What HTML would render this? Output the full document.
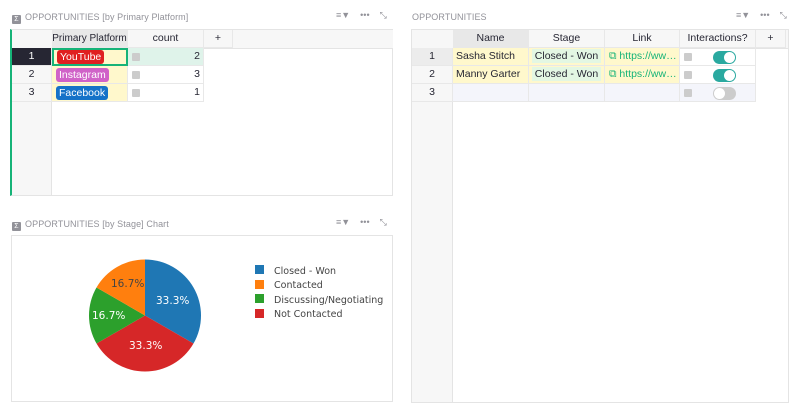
<!DOCTYPE html>
<html><head><style>
*{box-sizing:border-box;margin:0;padding:0}
body{width:800px;height:411px;background:#fff;font-family:"Liberation Sans",sans-serif;position:relative;overflow:hidden;font-size:11px;color:#262633}
.a{position:absolute}
.title{font-size:9px;color:#929299;letter-spacing:.1px;white-space:nowrap}
.sig{display:inline-block;width:9px;height:9px;background:#929299;color:#fff;font-size:7px;text-align:center;line-height:9px;border-radius:1px;margin-right:4px;vertical-align:-1px}
.icons{font-size:9px;color:#929299;white-space:nowrap}
.grid{border:1px solid #e4e4e4;background:#fff}
.c{position:absolute;border-right:1px solid #e8e8e8;border-bottom:1px solid #e8e8e8;height:18px;line-height:17px;text-align:center;font-size:10.5px;white-space:nowrap;overflow:hidden}
.h{background:#f7f7f7}
.tag{display:inline-block;color:#fff;border-radius:3px;padding:0 3px;line-height:14px;font-size:10.5px;margin-top:2px}
.ic{display:inline-block;width:8px;height:8px;background:#ccc;border-radius:1px;position:absolute;left:4px;top:5px}
.tg{position:absolute;width:23px;height:13px;border-radius:7px;top:3px;left:33px}
.tg i{position:absolute;width:11px;height:11px;border-radius:50%;background:#fff;top:1px}
</style></head><body>
<div class="a title" style="left:12px;top:12px"><span class="sig">Σ</span>OPPORTUNITIES [by Primary Platform]</div>
<div class="a icons" style="left:336px;top:10px">≡▼&nbsp;&nbsp;&nbsp;&nbsp;•••&nbsp;&nbsp;&nbsp;&nbsp;⤡</div>
<div class="a grid" style="left:10px;top:29px;width:383px;height:167px;border-left:2px solid #16b378">
 <div class="a h" style="left:0;top:0;width:40px;height:165px;border-right:1px solid #e4e4e4"></div>
 <div class="a h" style="left:0;top:0;width:381px;height:19px;border-bottom:1px solid #e4e4e4"></div>
 <div class="c h" style="left:40px;top:0;width:76px;background:#e8e8e8;font-size:10px">Primary Platform</div>
 <div class="c h" style="left:116px;top:0;width:76px">count</div>
 <div class="c h" style="left:192px;top:0;width:29px">+</div>
 <div class="c" style="left:0;top:18px;width:40px;background:#262633;color:#fff">1</div>
 <div class="c" style="left:0;top:36px;width:40px" >2</div>
 <div class="c" style="left:0;top:54px;width:40px">3</div>
 <div class="c" style="left:40px;top:18px;width:76px;background:#fff8cc;border:2px solid #16b378;text-align:left;padding-left:3px;line-height:13px"><span class="tag" style="background:#e02020;margin-top:0">YouTube</span></div>
 <div class="c" style="left:40px;top:36px;width:76px;background:#fff8cc;text-align:left;padding-left:4px"><span class="tag" style="background:#d062c8">Instagram</span></div>
 <div class="c" style="left:40px;top:54px;width:76px;background:#fff8cc;text-align:left;padding-left:4px"><span class="tag" style="background:#1572c8">Facebook</span></div>
 <div class="c" style="left:116px;top:18px;width:76px;background:#dff3ea;text-align:right;padding-right:3px"><i class="ic"></i>2</div>
 <div class="c" style="left:116px;top:36px;width:76px;text-align:right;padding-right:3px"><i class="ic"></i>3</div>
 <div class="c" style="left:116px;top:54px;width:76px;text-align:right;padding-right:3px"><i class="ic"></i>1</div>
</div>
<div class="a title" style="left:12px;top:219px"><span class="sig">Σ</span>OPPORTUNITIES [by Stage] Chart</div>
<div class="a icons" style="left:336px;top:217px">≡▼&nbsp;&nbsp;&nbsp;&nbsp;•••&nbsp;&nbsp;&nbsp;&nbsp;⤡</div>
<div class="a grid" style="left:11px;top:235px;width:382px;height:167px"></div>
<svg class="a" style="left:0;top:0" width="400" height="411">
 <path d="M145,315.5 L145,259.5 A56,56 0 0 1 193.5,343.5Z" fill="#1f77b4"/>
 <path d="M145,315.5 L193.5,343.5 A56,56 0 0 1 96.5,343.5Z" fill="#d62728"/>
 <path d="M145,315.5 L96.5,343.5 A56,56 0 0 1 96.5,287.5Z" fill="#2ca02c"/>
 <path d="M145,315.5 L96.5,287.5 A56,56 0 0 1 145,259.5Z" fill="#ff7f0e"/>
 <g font-family="DejaVu Sans" font-size="10.5" fill="#fff">
 <text x="156" y="304">33.3%</text>
 <text x="129" y="349">33.3%</text>
 <text x="92" y="319">16.7%</text>
 <text x="111" y="287" fill="#444">16.7%</text>
 </g>
 <g font-family="DejaVu Sans" font-size="9.5" fill="#444">
 <rect x="255" y="265" width="9" height="9" fill="#1f77b4"/><text x="274" y="274">Closed - Won</text>
 <rect x="255" y="280" width="9" height="9" fill="#ff7f0e"/><text x="274" y="288">Contacted</text>
 <rect x="255" y="294" width="9" height="9" fill="#2ca02c"/><text x="274" y="303">Discussing/Negotiating</text>
 <rect x="255" y="309" width="9" height="9" fill="#d62728"/><text x="274" y="317">Not Contacted</text>
 </g>
</svg>
<div class="a title" style="left:412px;top:12px">OPPORTUNITIES</div>
<div class="a icons" style="left:736px;top:10px">≡▼&nbsp;&nbsp;&nbsp;&nbsp;•••&nbsp;&nbsp;&nbsp;&nbsp;⤡</div>
<div class="a grid" style="left:411px;top:29px;width:378px;height:374px">
 <div class="a h" style="left:0;top:0;width:41px;height:372px;border-right:1px solid #e4e4e4"></div>
 <div class="a h" style="left:0;top:0;width:376px;height:19px;border-bottom:1px solid #e4e4e4"></div>
 <div class="c h" style="left:41px;top:0;width:76px;background:#e8e8e8">Name</div>
 <div class="c h" style="left:117px;top:0;width:76px">Stage</div>
 <div class="c h" style="left:193px;top:0;width:75px">Link</div>
 <div class="c h" style="left:268px;top:0;width:76px">Interactions?</div>
 <div class="c h" style="left:344px;top:0;width:30px">+</div>
 <div class="c" style="left:0;top:18px;width:41px;background:#ececec">1</div>
 <div class="c" style="left:0;top:36px;width:41px">2</div>
 <div class="c" style="left:0;top:54px;width:41px">3</div>
 <div class="c" style="left:41px;top:18px;width:76px;background:#fff8cc;text-align:left;padding-left:3px">Sasha Stitch</div>
 <div class="c" style="left:41px;top:36px;width:76px;background:#fff8cc;text-align:left;padding-left:3px">Manny Garter</div>
 <div class="c" style="left:41px;top:54px;width:76px;background:#f4f5fb"></div>
 <div class="c" style="left:117px;top:18px;width:76px;background:#fff8cc"><span style="background:#e3f7e3;padding:1px 3px">Closed - Won</span></div>
 <div class="c" style="left:117px;top:36px;width:76px;background:#fff8cc"><span style="background:#e3f7e3;padding:1px 3px">Closed - Won</span></div>
 <div class="c" style="left:117px;top:54px;width:76px;background:#f4f5fb"></div>
 <div class="c" style="left:193px;top:18px;width:75px;background:#fff8cc;color:#16b378;text-align:left;padding-left:4px">⧉ https://ww…</div>
 <div class="c" style="left:193px;top:36px;width:75px;background:#fff8cc;color:#16b378;text-align:left;padding-left:4px">⧉ https://ww…</div>
 <div class="c" style="left:193px;top:54px;width:75px;background:#f4f5fb"></div>
 <div class="c" style="left:268px;top:18px;width:76px"><i class="ic"></i><span class="tg" style="background:#2aa9a0"><i style="right:1px"></i></span></div>
 <div class="c" style="left:268px;top:36px;width:76px"><i class="ic"></i><span class="tg" style="background:#2aa9a0"><i style="right:1px"></i></span></div>
 <div class="c" style="left:268px;top:54px;width:76px;background:#f4f5fb"><i class="ic"></i><span class="tg" style="background:#ccc"><i style="left:1px"></i></span></div>
</div>
</body></html>
